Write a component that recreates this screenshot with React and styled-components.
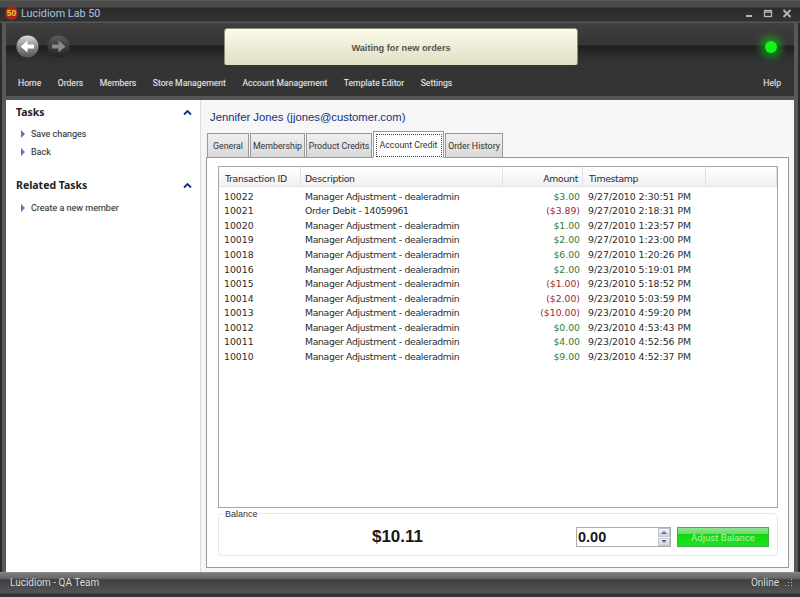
import React from "react";
import styled, { createGlobalStyle } from "styled-components";

const GlobalStyle = createGlobalStyle`
  html, body {
    margin: 0;
    padding: 0;
    background: #333;
  }
  * {
    box-sizing: border-box;
  }
`;

const uiFont = `"DejaVu Sans", "Noto Sans", sans-serif`;
const narrowFont = `Roboto, "Noto Sans", sans-serif`;
const armFont = `"Liberation Sans", Arial, sans-serif`;

const Window = styled.div`
  width: 800px;
  height: 597px;
  display: flex;
  flex-direction: column;
  overflow: hidden;
  background: #3a3a3a;
  font-family: ${uiFont};
`;

const TitleBar = styled.div`
  height: 23px;
  flex: none;
  display: flex;
  align-items: center;
  padding: 3px 8px 0 5px;
  gap: 3px;
  background: linear-gradient(#5a5a5a 0, #4a4a4a 2px, #484848 7px, #2c2c2c 8px, #323232 21px, #555 22px);
`;

const AppName = styled.span`
  flex: 1;
  font-family: ${narrowFont};
  font-size: 10.8px;
  color: #a9c3e2;
`;

const WindowControls = styled.div`
  display: flex;
  align-items: center;
  gap: 9px;
  color: #b5b5b5;
`;

const Frame = styled.div`
  flex: 1;
  min-height: 0;
  display: flex;
  flex-direction: column;
  padding: 0 6px;
  background: linear-gradient(
    90deg,
    #2b2b2b 2px,
    #585858 2px,
    #585858 6px,
    #333 6px,
    #333 794px,
    #585858 794px,
    #585858 798px,
    #2b2b2b 798px
  );
`;

const TopRow = styled.div`
  height: 42px;
  flex: none;
  display: flex;
  align-items: center;
  padding: 0 17px 0 10px;
  background: linear-gradient(#3f3f3f 0, #353535 22px, #1d1d1d 23px, #2c2c2c 32px, #353535 42px);
`;

const NavArrow = styled.svg`
  flex: none;
  margin: 5px 8px 0 0;
`;

const StatusBanner = styled.div`
  width: 354px;
  height: 38px;
  margin-left: 146px;
  margin-top: 6px;
  display: flex;
  align-items: center;
  justify-content: center;
  padding-top: 1px;
  border-radius: 3px;
  border: 1px solid #8c8c78;
  background: linear-gradient(#fbfbe9, #dedfc3);
  font-family: ${armFont};
  font-size: 9.2px;
  font-weight: 700;
  color: #555;
`;

const Led = styled.div`
  width: 12px;
  height: 12px;
  margin-left: auto;
  margin-top: 6px;
  border-radius: 50%;
  background: #13f513;
  box-shadow: 0 0 7px 5px rgba(0, 240, 20, 0.45);
`;

const NavBar = styled.div`
  height: 31px;
  flex: none;
  display: flex;
  align-items: center;
  gap: 16.5px;
  padding: 4px 13px 0 12px;
  background: #343434;
  font-family: ${narrowFont};
  font-size: 8.65px;
  color: #e4e4e4;
  text-shadow: 0 0 1px rgba(255, 255, 255, 0.35);
`;

const NavItem = styled.span`
  margin-left: ${(props) => (props.$end ? "auto" : "0")};
`;

const Body = styled.div`
  flex: 1;
  min-height: 0;
  display: flex;
  border-top: 4px solid #555;
`;

const Sidebar = styled.aside`
  width: 195px;
  flex: none;
  padding: 5px 8px 0 10px;
  background: #fff;
  border-right: 1px solid #dcdcdc;
`;

const TaskHeading = styled.div`
  display: flex;
  align-items: center;
  justify-content: space-between;
  height: 14px;
  margin-top: ${(props) => (props.$spaced ? "17px" : "0")};
  margin-bottom: ${(props) => (props.$spaced ? "7px" : "6px")};
  font-family: "Noto Sans", sans-serif;
  font-size: 10.5px;
  font-weight: 700;
  color: #222;
`;

const TaskLink = styled.div`
  display: flex;
  align-items: center;
  height: 18px;
  padding-left: 5px;
  gap: 6px;
  font-family: ${narrowFont};
  font-size: 9px;
  color: #333;
  text-shadow: 0 0 1px rgba(0, 0, 0, 0.2);
`;

const Triangle = styled.span`
  width: 0;
  height: 0;
  border-left: 4px solid #5b78ae;
  border-top: 4px solid transparent;
  border-bottom: 4px solid transparent;
`;

const Main = styled.main`
  flex: 1;
  min-width: 0;
  display: flex;
  flex-direction: column;
  padding: 0 5px 4px 5px;
  background: #f6f6f6;
`;

const CustomerName = styled.h1`
  margin: 10px 0 0 4px;
  height: 16px;
  font-family: ${armFont};
  font-size: 11.3px;
  font-weight: 400;
  line-height: 15px;
  color: #12307c;
`;

const TabStrip = styled.div`
  display: flex;
  align-items: flex-end;
  height: 27px;
  margin-top: 5px;
  padding-left: 1px;
  gap: 1px;
  position: relative;
  z-index: 1;
  margin-bottom: -1px;
`;

const Tab = styled.div`
  width: ${(props) => props.$w}px;
  height: ${(props) => (props.$active ? "27px" : "25px")};
  display: flex;
  align-items: center;
  justify-content: center;
  font-family: ${narrowFont};
  font-size: 8.8px;
  white-space: nowrap;
  color: #333;
  border: 1px solid #999;
  border-bottom: ${(props) => (props.$active ? "1px solid #fff" : "1px solid #999")};
  background: ${(props) => (props.$active ? "#fff" : "linear-gradient(#f0f0f0, #d8d8d8)")};
`;

const TabFocus = styled.span`
  display: flex;
  align-items: center;
  justify-content: center;
  width: 66px;
  height: 23px;
  margin-top: 1px;
  border: 1px dotted #444;
`;

const TabPanel = styled.section`
  flex: 1;
  min-height: 0;
  display: flex;
  flex-direction: column;
  padding: 8px 10px 11px 11px;
  background: #fff;
  border: 1px solid #999;
`;

const TableBox = styled.div`
  flex: 1;
  min-height: 0;
  border: 1px solid #a6a6a6;
  background: #fff;
`;

const Row = styled.div`
  display: grid;
  grid-template-columns: 82px 202px 80px 1fr;
  height: ${(props) => (props.$head ? "20px" : "14.55px")};
  align-items: center;
  font-size: 9.3px;
  color: #2b2b2b;
`;

const HeaderRow = styled(Row)`
  grid-template-columns: 82px 202px 80px 123px 1fr;
  margin-bottom: 2px;
  background: linear-gradient(#fff, #f1f1f3);
  border-bottom: 1px solid #e4e4e8;
`;

const HeadCell = styled.div`
  height: 100%;
  display: flex;
  align-items: center;
  padding: 4px 4px 0 ${(props) => props.$pad || 6}px;
  border-right: 1px solid #e2e2e6;
  justify-content: ${(props) => (props.$right ? "flex-end" : "flex-start")};
  letter-spacing: -0.3px;
  white-space: nowrap;
`;

const Cell = styled.div`
  padding: 0 5px;
  white-space: nowrap;
`;

const DescriptionCell = styled(Cell)`
  padding-left: 4px;
  letter-spacing: -0.33px;
`;

const AmountCell = styled(Cell)`
  text-align: right;
  padding-right: 3px;
  color: ${(props) => (props.$negative ? "#9c2a32" : "#2f7d3a")};
`;

const BalanceGroup = styled.fieldset`
  flex: none;
  height: 47px;
  margin: 1px 0 0 0;
  padding: 0 8px 0 0;
  border: 1px solid #e6e8ea;
  border-radius: 4px;
`;

const BalanceLegend = styled.legend`
  position: relative;
  top: 1px;
  margin-left: 5px;
  padding: 0 1px;
  font-family: ${armFont};
  font-size: 9px;
  line-height: 9px;
  color: #333;
`;

const BalanceRow = styled.div`
  display: flex;
  align-items: center;
  height: 20px;
  margin-top: 9px;
`;

const BalanceAmount = styled.div`
  width: 204px;
  text-align: right;
  font-family: ${armFont};
  font-size: 17px;
  font-weight: 700;
  color: #1a1a1a;
`;

const Spinner = styled.div`
  display: flex;
  width: 95px;
  height: 20px;
  margin-left: auto;
  border: 1px solid #aaa;
  background: #fff;
`;

const SpinInput = styled.div`
  flex: 1;
  padding-left: 1px;
  font-family: ${armFont};
  font-size: 14.5px;
  font-weight: 700;
  line-height: 18px;
  color: #1a1a1a;
`;

const SpinButtons = styled.div`
  width: 12px;
  display: flex;
  flex-direction: column;
  gap: 1px;
  background: #fff;
`;

const SpinButton = styled.div`
  flex: 1;
  display: flex;
  align-items: center;
  justify-content: center;
  background: linear-gradient(#f2f4f6, #cfd3da);
  border: 1px solid #c3c7cc;
  &::after {
    content: "";
    border-left: 3px solid transparent;
    border-right: 3px solid transparent;
    border-top: ${(props) => (props.$down ? "3px solid #5c6f96" : "none")};
    border-bottom: ${(props) => (props.$down ? "none" : "3px solid #5c6f96")};
  }
`;

const AdjustButton = styled.button`
  width: 92px;
  height: 20px;
  margin-left: 6px;
  padding: 0;
  border: 1px solid #3fae4a;
  background: linear-gradient(#8fe68f 0, #6bd66b 35%, #10d810 36%, #1ee21e 100%);
  font-family: ${narrowFont};
  font-size: 9.6px;
  color: #b9efb4;
`;

const Footer = styled.footer`
  height: 25px;
  flex: none;
  display: flex;
  align-items: center;
  justify-content: space-between;
  padding: 0 7px 5px 10px;
  border-top: 1px solid #8a8a8a;
  background: linear-gradient(#7a7a7a 0, #6a6a6a 5px, #3f3f3f 7px, #555 20px, #333 21px);
  font-family: ${narrowFont};
  font-size: 10px;
  color: #dcdcdc;
`;

const FooterEnd = styled.div`
  display: flex;
  align-items: center;
  gap: 4px;
`;

const transactions = [
  ["10022", "Manager Adjustment - dealeradmin", "$3.00", "9/27/2010 2:30:51 PM"],
  ["10021", "Order Debit - 14059961", "($3.89)", "9/27/2010 2:18:31 PM"],
  ["10020", "Manager Adjustment - dealeradmin", "$1.00", "9/27/2010 1:23:57 PM"],
  ["10019", "Manager Adjustment - dealeradmin", "$2.00", "9/27/2010 1:23:00 PM"],
  ["10018", "Manager Adjustment - dealeradmin", "$6.00", "9/27/2010 1:20:26 PM"],
  ["10016", "Manager Adjustment - dealeradmin", "$2.00", "9/23/2010 5:19:01 PM"],
  ["10015", "Manager Adjustment - dealeradmin", "($1.00)", "9/23/2010 5:18:52 PM"],
  ["10014", "Manager Adjustment - dealeradmin", "($2.00)", "9/23/2010 5:03:59 PM"],
  ["10013", "Manager Adjustment - dealeradmin", "($10.00)", "9/23/2010 4:59:20 PM"],
  ["10012", "Manager Adjustment - dealeradmin", "$0.00", "9/23/2010 4:53:43 PM"],
  ["10011", "Manager Adjustment - dealeradmin", "$4.00", "9/23/2010 4:52:56 PM"],
  ["10010", "Manager Adjustment - dealeradmin", "$9.00", "9/23/2010 4:52:37 PM"],
];

const tabs = [
  ["General", 42],
  ["Membership", 55],
  ["Product Credits", 66],
  ["Account Credit", 71],
  ["Order History", 58],
];

const navItems = [
  "Home",
  "Orders",
  "Members",
  "Store Management",
  "Account Management",
  "Template Editor",
  "Settings",
];

const Logo = () => (
  <svg width="13" height="14" viewBox="0 0 13 14">
    <ellipse cx="6.5" cy="7" rx="6.4" ry="6.9" fill="#a8281c" />
    <text
      x="6.5"
      y="10"
      textAnchor="middle"
      fontFamily="Liberation Sans, sans-serif"
      fontSize="8.5"
      fontWeight="700"
      fill="#f7c531"
    >
      50
    </text>
  </svg>
);

const ArrowButton = ({ forward }) => (
  <NavArrow width="23" height="23" viewBox="0 0 23 23">
    <defs>
      <linearGradient id={forward ? "gF" : "gB"} x1="0" y1="0" x2="0" y2="1">
        <stop offset="0" stopColor={forward ? "#5c5c5c" : "#dcdcdc"} />
        <stop offset="0.5" stopColor={forward ? "#3c3c3c" : "#8d8d8d"} />
        <stop offset="1" stopColor={forward ? "#232323" : "#555"} />
      </linearGradient>
    </defs>
    <circle cx="11.5" cy="11.5" r="11" fill={`url(#${forward ? "gF" : "gB"})`} />
    {forward ? (
      <path d="M5 9.5h6.5V5.5l7 6-7 6v-4H5z" fill="#8a8a8a" />
    ) : (
      <path d="M18 9.5h-6.5V5.5l-7 6 7 6v-4H18z" fill="#fff" />
    )}
  </NavArrow>
);

const Chevron = () => (
  <svg width="9" height="7" viewBox="0 0 9 7">
    <path d="M1 5.5 4.5 2 8 5.5" fill="none" stroke="#12307c" strokeWidth="1.8" />
  </svg>
);

const Controls = () => (
  <WindowControls>
    <svg width="9" height="9" viewBox="0 0 9 9">
      <path d="M1 7h6" stroke="currentColor" strokeWidth="2" />
    </svg>
    <svg width="10" height="9" viewBox="0 0 10 9">
      <rect x="1.5" y="1.5" width="7" height="6" fill="none" stroke="currentColor" strokeWidth="1.3" />
      <path d="M1 3h8" stroke="currentColor" strokeWidth="1.5" />
    </svg>
    <svg width="10" height="9" viewBox="0 0 10 9">
      <path d="M1.5 1 8.5 8M8.5 1 1.5 8" stroke="currentColor" strokeWidth="1.9" />
    </svg>
  </WindowControls>
);

const Grip = () => (
  <svg width="10" height="10" viewBox="0 0 10 10">
    <path d="M8 1h1v1H8zM5 4h1v1H5zM8 4h1v1H8zM2 7h1v1H2zM5 7h1v1H5zM8 7h1v1H8z" fill="#b8b8b8" />
  </svg>
);

export default function App() {
  return (
    <>
      <GlobalStyle />
      <Window>
        <TitleBar>
          <Logo />
          <AppName>Lucidiom Lab 50</AppName>
          <Controls />
        </TitleBar>
        <Frame>
          <TopRow>
            <ArrowButton />
            <ArrowButton forward />
            <StatusBanner>Waiting for new orders</StatusBanner>
            <Led />
          </TopRow>
          <NavBar>
            {navItems.map((item) => (
              <NavItem key={item}>{item}</NavItem>
            ))}
            <NavItem $end>Help</NavItem>
          </NavBar>
          <Body>
            <Sidebar>
              <TaskHeading>
                Tasks
                <Chevron />
              </TaskHeading>
              <TaskLink>
                <Triangle />
                Save changes
              </TaskLink>
              <TaskLink>
                <Triangle />
                Back
              </TaskLink>
              <TaskHeading $spaced>
                Related Tasks
                <Chevron />
              </TaskHeading>
              <TaskLink>
                <Triangle />
                Create a new member
              </TaskLink>
            </Sidebar>
            <Main>
              <CustomerName>Jennifer Jones (jjones@customer.com)</CustomerName>
              <TabStrip>
                {tabs.map(([label, width]) => (
                  <Tab key={label} $w={width} $active={label === "Account Credit"}>
                    {label === "Account Credit" ? <TabFocus>{label}</TabFocus> : label}
                  </Tab>
                ))}
              </TabStrip>
              <TabPanel>
                <TableBox>
                  <HeaderRow $head>
                    <HeadCell>Transaction ID</HeadCell>
                    <HeadCell $pad={4}>Description</HeadCell>
                    <HeadCell $right>Amount</HeadCell>
                    <HeadCell>Timestamp</HeadCell>
                    <HeadCell />
                  </HeaderRow>
                  {transactions.map(([id, description, amount, timestamp]) => (
                    <Row key={id}>
                      <Cell>{id}</Cell>
                      <DescriptionCell>{description}</DescriptionCell>
                      <AmountCell $negative={amount.startsWith("(")}>{amount}</AmountCell>
                      <Cell>{timestamp}</Cell>
                    </Row>
                  ))}
                </TableBox>
                <BalanceGroup>
                  <BalanceLegend>Balance</BalanceLegend>
                  <BalanceRow>
                    <BalanceAmount>$10.11</BalanceAmount>
                    <Spinner>
                      <SpinInput>0.00</SpinInput>
                      <SpinButtons>
                        <SpinButton />
                        <SpinButton $down />
                      </SpinButtons>
                    </Spinner>
                    <AdjustButton>Adjust Balance</AdjustButton>
                  </BalanceRow>
                </BalanceGroup>
              </TabPanel>
            </Main>
          </Body>
        </Frame>
        <Footer>
          <span>Lucidiom - QA Team</span>
          <FooterEnd>
            Online
            <Grip />
          </FooterEnd>
        </Footer>
      </Window>
    </>
  );
}
